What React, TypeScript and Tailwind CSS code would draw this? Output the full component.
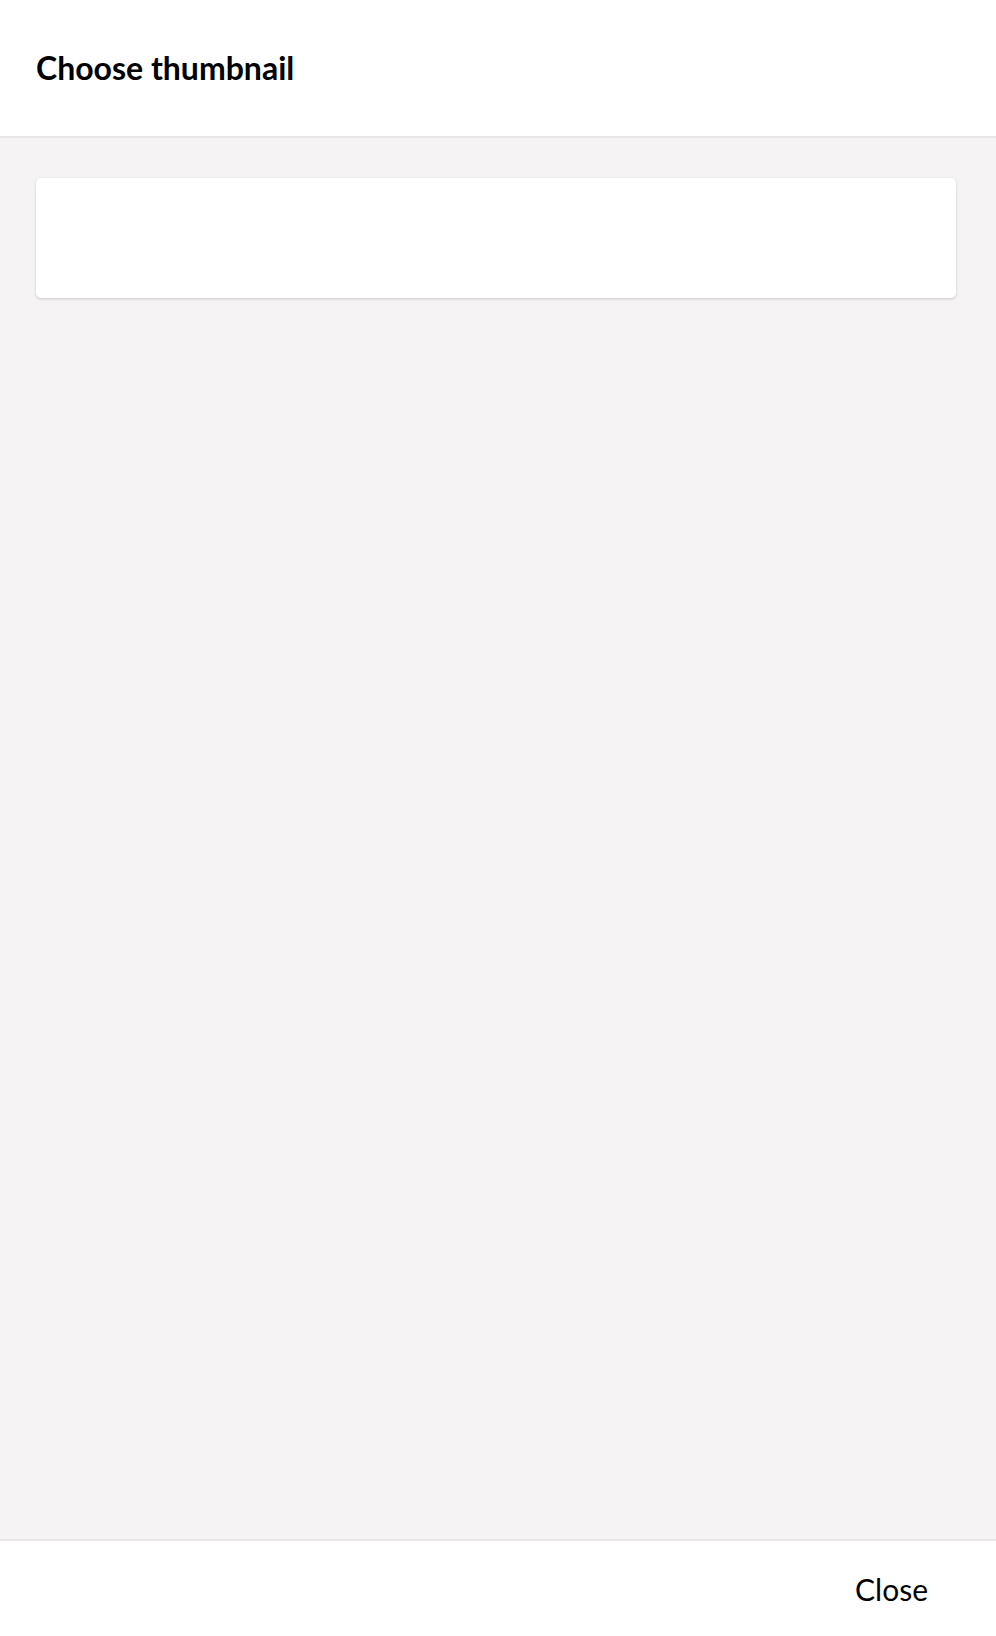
export default function App() {
  return (
    <div className="flex flex-col h-[1636px] w-[996px] bg-white font-['Lato',sans-serif] text-black">
      <header className="h-[138px] shrink-0 flex items-center pl-[36px] border-b-2 border-[#e8e6e7]">
        <h1 className="text-[32px] font-bold leading-none">Choose thumbnail</h1>
      </header>

      <main className="flex-1 bg-[#f5f3f4] pt-[40px] pl-[36px] pr-[40px]">
        <div className="h-[120px] bg-white rounded-[5px] shadow-[0_1px_3px_rgba(0,0,0,0.18)]" />
      </main>

      <footer className="h-[97px] shrink-0 flex items-center justify-end pr-[68px] border-t-2 border-[#e8e6e7]">
        <button className="text-[30px] leading-none text-black">Close</button>
      </footer>
    </div>
  );
}
